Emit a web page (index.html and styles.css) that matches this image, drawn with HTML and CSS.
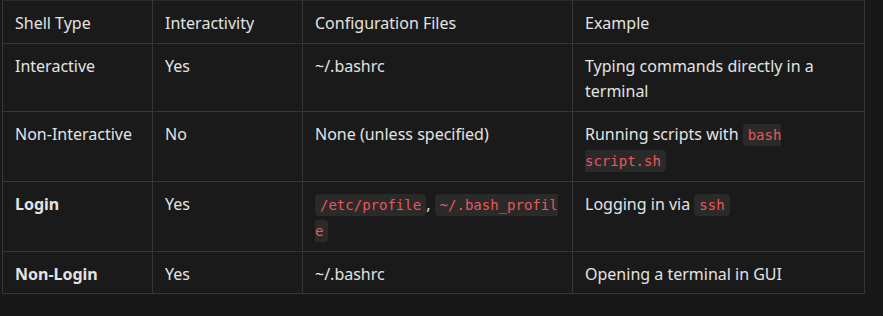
FILE: index.html
```html
<!DOCTYPE html>
<html lang="en">
<head>
  <meta charset="UTF-8" />
  <title>Shell Types</title>
  <link rel="stylesheet" href="styles.css">
</head>
<body>
  <div class="table-wrap">
    <table class="shell-table">
      <colgroup>
        <col class="col-type">
        <col class="col-inter">
        <col class="col-config">
        <col class="col-example">
      </colgroup>
      <thead>
        <tr>
          <th>Shell Type</th>
          <th>Interactivity</th>
          <th>Configuration Files</th>
          <th>Example</th>
        </tr>
      </thead>
      <tbody>
        <tr>
          <td>Interactive</td>
          <td>Yes</td>
          <td>~/.bashrc</td>
          <td>Typing commands directly in a terminal</td>
        </tr>
        <tr>
          <td>Non-Interactive</td>
          <td>No</td>
          <td>None (unless specified)</td>
          <td>Running scripts with <code>bash script.sh</code></td>
        </tr>
        <tr>
          <td><strong>Login</strong></td>
          <td>Yes</td>
          <td class="break"><code>/etc/profile</code>, <code>~/.bash_profile</code></td>
          <td>Logging in via <code>ssh</code></td>
        </tr>
        <tr>
          <td><strong>Non-Login</strong></td>
          <td>Yes</td>
          <td>~/.bashrc</td>
          <td>Opening a terminal in GUI</td>
        </tr>
      </tbody>
    </table>
  </div>
</body>
</html>
```

FILE: styles.css
```css
body {
  background-color: #181818;
  font-family: 'Segoe UI', 'Noto Sans', sans-serif;
  margin: 0;
  padding: 0;
  color: #e3e3e3;
}

.table-wrap {
  padding: 0 19px 0 2px;
}

.shell-table {
  border-collapse: collapse;
  width: 862px;
  table-layout: fixed;
  background: #1a1a1a;
  font-size: 16px;
  line-height: 25.5px;
}

.shell-table th,
.shell-table td {
  border: 1px solid #363636;
  padding: 10px 12px 6px;
  text-align: left;
  vertical-align: top;
  font-weight: 400;
}

.shell-table thead th {
  border-top-color: #2a2a2a;
}

.col-type { width: 150px; }
.col-inter { width: 150px; }
.col-config { width: 270px; }
.col-example { width: 292px; }

.shell-table strong {
  font-weight: 700;
}

.break {
  overflow-wrap: anywhere;
  word-break: break-all;
}

.shell-table code {
  font-family: 'DejaVu Sans Mono', monospace;
  font-size: 14px;
  color: #e8585a;
  background: #2a2a2a;
  padding: 3px 5px;
  border-radius: 4px;
}
```
